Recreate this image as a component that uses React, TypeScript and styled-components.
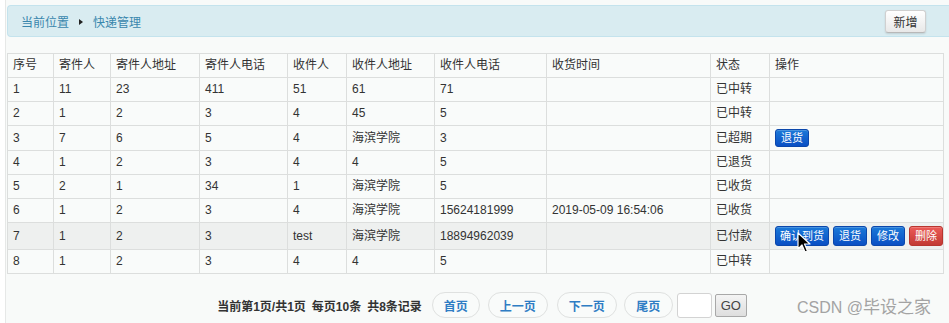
import React from "react";
import styled, { createGlobalStyle } from "styled-components";

const Global = createGlobalStyle`
  html, body { margin: 0; padding: 0; background: #ffffff; }
  body { font-family: "Liberation Sans", "Noto Sans CJK SC", sans-serif; font-size: 12px; color: #333; }
`;

const Page = styled.div`
  position: relative;
  margin-left: 5px;
  border-left: 1px solid #e6e8e7;
  background: #f8faf9;
  padding: 5px 0 6px 1px;
  min-height: 312px;
`;

const Crumbs = styled.div`
  display: flex;
  align-items: center;
  justify-content: space-between;
  height: 30px;
  padding: 0 23px 0 13px;
  background: #d9ecf1;
  border: 1px solid #c4e3ed;
  border-right: none;
  border-radius: 4px 0 0 4px;
`;

const Trail = styled.div`
  display: flex;
  align-items: center;
  gap: 7px;
  color: #3a87ad;
  font-size: 12px;
  padding-top: 1px;
`;

const Arrow = styled.span`
  width: 0;
  height: 0;
  border-top: 3px solid transparent;
  border-bottom: 3px solid transparent;
  border-left: 4px solid #222;
  margin: 0 3px;
`;

const PlainButton = styled.button`
  height: 23px;
  width: 41px;
  margin-top: 1px;
  font-family: inherit;
  font-size: 12px;
  color: #333;
  background: linear-gradient(#ffffff, #e8e8e8);
  border: 1px solid #d0d0d0;
  border-bottom-color: #b8b8b8;
  border-radius: 3px;
  box-shadow: 0 1px 2px rgba(0, 0, 0, 0.12);
  padding: 0;
`;

const Table = styled.table`
  margin-top: 16px;
  width: 936px;
  border-collapse: collapse;
  table-layout: fixed;
  background: #f9fbfa;
  border: 1px solid #dcdedd;
`;

const Th = styled.th<{ $w: number }>`
  box-sizing: border-box;
  width: ${(p) => p.$w}px;
  text-align: left;
  font-weight: normal;
  padding: 3px 5px;
  line-height: 17px;
  border: 1px solid #dcdedd;
  color: #333;
  white-space: nowrap;
`;

const Tr = styled.tr<{ $hover?: boolean }>`
  background: ${(p) => (p.$hover ? "#eef0ef" : "transparent")};
`;

const Td = styled.td`
  padding: 3px 5px;
  line-height: 17px;
  border: 1px solid #dcdedd;
  color: #333;
  white-space: nowrap;
  overflow: hidden;
`;

const Actions = styled.div`
  display: flex;
  gap: 4px;
`;

const MiniButton = styled.span<{ $danger?: boolean; $h?: number }>`
  display: inline-flex;
  flex-shrink: 0;
  align-items: center;
  justify-content: center;
  box-sizing: border-box;
  min-width: 34px;
  height: ${(p) => p.$h ?? 18}px;
  padding: 0 4px;
  font-size: 11px;
  color: #fff;
  border-radius: 3px;
  background: ${(p) =>
    p.$danger
      ? "linear-gradient(#ec5b57, #c23a33)"
      : "linear-gradient(#1b79d8, #0a4fc4)"};
  border: 1px solid ${(p) => (p.$danger ? "#b8352f" : "#0b47ab")};
  box-shadow: inset 0 1px 0 rgba(255, 255, 255, 0.2);
`;

const Pager = styled.div`
  display: flex;
  justify-content: center;
  align-items: center;
  margin-top: 18px;
  padding-left: 8px;
  height: 26px;
`;

const Summary = styled.div`
  display: flex;
  gap: 6px;
  font-weight: bold;
  font-size: 12px;
  color: #333;
  margin-right: 10px;
`;

const Pill = styled.span<{ $w: number; $gap: number }>`
  display: inline-flex;
  align-items: center;
  justify-content: center;
  box-sizing: border-box;
  width: ${(p) => p.$w}px;
  height: 26px;
  margin-right: ${(p) => p.$gap}px;
  border: 1px solid #dfe1e0;
  border-radius: 13px;
  background: #f9fbfa;
  color: #2f7dc4;
  font-weight: bold;
  font-size: 12px;
`;

const PageInput = styled.input`
  width: 35px;
  height: 25px;
  box-sizing: border-box;
  border: 1px solid #d3d3d3;
  border-radius: 3px;
  background: #fff;
  margin-right: 3px;
  padding: 0;
`;

const GoButton = styled.button`
  width: 32px;
  height: 23px;
  padding: 0;
  font-family: "Liberation Sans", sans-serif;
  font-size: 13px;
  color: #444;
  background: linear-gradient(#f4f4f4, #dedede);
  border: 1px solid #a8a8a8;
  border-radius: 2px;
`;

const Watermark = styled.div`
  position: absolute;
  left: 791px;
  top: 293px;
  font-size: 16px;
  color: #a3a3a3;
  font-family: "Liberation Sans", "Noto Sans CJK SC", sans-serif;
  pointer-events: none;
  white-space: nowrap;
`;

const WaterCjk = styled.span`
  font-size: 17px;
`;

const Cursor = styled.svg`
  position: absolute;
  left: 791px;
  top: 232px;
  pointer-events: none;
`;

const columns: [string, number][] = [
  ["序号", 46],
  ["寄件人", 57],
  ["寄件人地址", 89],
  ["寄件人电话", 88],
  ["收件人", 59],
  ["收件人地址", 88],
  ["收件人电话", 112],
  ["收货时间", 164],
  ["状态", 59],
  ["操作", 174],
];

type Row = { cells: string[]; status: string; act?: "return" | "full" };

const rows: Row[] = [
  { cells: ["1", "11", "23", "411", "51", "61", "71", ""], status: "已中转" },
  { cells: ["2", "1", "2", "3", "4", "45", "5", ""], status: "已中转" },
  { cells: ["3", "7", "6", "5", "4", "海滨学院", "3", ""], status: "已超期", act: "return" },
  { cells: ["4", "1", "2", "3", "4", "4", "5", ""], status: "已退货" },
  { cells: ["5", "2", "1", "34", "1", "海滨学院", "5", ""], status: "已收货" },
  { cells: ["6", "1", "2", "3", "4", "海滨学院", "15624181999", "2019-05-09 16:54:06"], status: "已收货" },
  { cells: ["7", "1", "2", "3", "test", "海滨学院", "18894962039", ""], status: "已付款", act: "full" },
  { cells: ["8", "1", "2", "3", "4", "4", "5", ""], status: "已中转" },
];

export default function App() {
  return (
    <>
      <Global />
      <Page>
        <Crumbs>
          <Trail>
            <span>当前位置</span>
            <Arrow />
            <span>快递管理</span>
          </Trail>
          <PlainButton>新增</PlainButton>
        </Crumbs>
        <Table>
          <thead>
            <tr>
              {columns.map(([name, w]) => (
                <Th key={name} $w={w}>
                  {name}
                </Th>
              ))}
            </tr>
          </thead>
          <tbody>
            {rows.map((r, i) => (
              <Tr key={i} $hover={r.act === "full"}>
                {r.cells.map((c, j) => (
                  <Td key={j}>{c}</Td>
                ))}
                <Td>{r.status}</Td>
                <Td>
                  {r.act === "return" && (
                    <Actions>
                      <MiniButton>退货</MiniButton>
                    </Actions>
                  )}
                  {r.act === "full" && (
                    <Actions>
                      <MiniButton $h={20}>确认到货</MiniButton>
                      <MiniButton $h={20}>退货</MiniButton>
                      <MiniButton $h={20}>修改</MiniButton>
                      <MiniButton $h={20} $danger>删除</MiniButton>
                    </Actions>
                  )}
                </Td>
              </Tr>
            ))}
          </tbody>
        </Table>
        <Pager>
          <Summary>
            <span>当前第1页/共1页</span>
            <span>每页10条</span>
            <span>共8条记录</span>
          </Summary>
          <Pill $w={48} $gap={8}>首页</Pill>
          <Pill $w={60} $gap={9}>上一页</Pill>
          <Pill $w={60} $gap={7}>下一页</Pill>
          <Pill $w={49} $gap={4}>尾页</Pill>
          <PageInput />
          <GoButton>GO</GoButton>
        </Pager>
        <Cursor width="14" height="22" viewBox="0 0 14 22">
          <path
            d="M1 1 L1 17 L5 13 L8 20 L10.5 19 L7.5 12 L13 12 Z"
            fill="#000"
            stroke="#fff"
            strokeWidth="1.2"
            strokeLinejoin="round"
          />
        </Cursor>
        <Watermark>
          CSDN @<WaterCjk>毕设之家</WaterCjk>
        </Watermark>
      </Page>
    </>
  );
}
